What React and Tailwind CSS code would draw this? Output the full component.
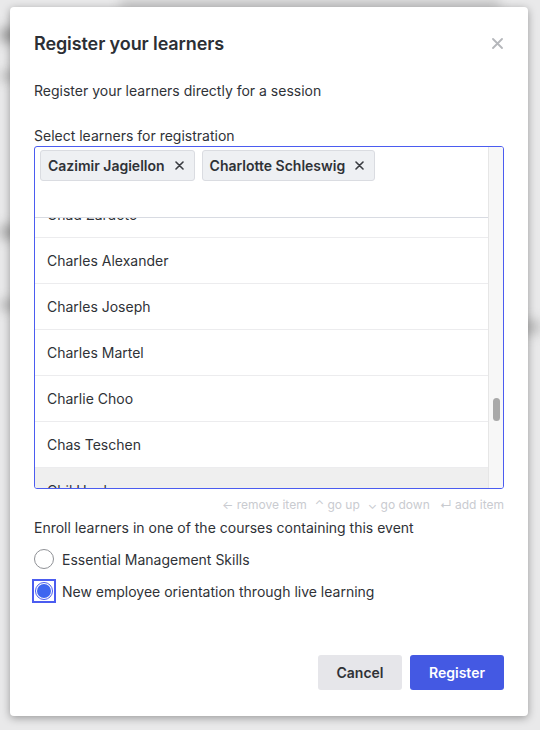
import React, { useState } from 'react'

const learners = [
  'Chad Zardoto',
  'Charles Alexander',
  'Charles Joseph',
  'Charles Martel',
  'Charlie Choo',
  'Chas Teschen',
  'Chil Hook',
]

const courses = [
  'Essential Management Skills',
  'New employee orientation through live learning',
]

function Chip ({ label }) {
  return (
    <span className="flex items-center gap-[10px] h-[31px] pl-[7px] pr-[10px] rounded-[3px] border border-[#dadce1] bg-[#eef0f3] text-[14px] font-semibold text-[#2f3237]">
      {label}
      <svg width="9" height="9" viewBox="0 0 9 9" className="text-[#3a3d42]">
        <path d="M1 1l7 7M8 1l-7 7" stroke="currentColor" strokeWidth="1.6" strokeLinecap="round" />
      </svg>
    </span>
  )
}

export default function App () {
  const [course, setCourse] = useState(1)

  return (
    <div className="relative w-[540px] h-[730px] overflow-hidden bg-[#e9e9ea]" style={{ fontFamily: 'Inter, "Noto Sans", sans-serif' }}>
      {/* blurred page behind the modal */}
      <div className="absolute inset-0 blur-[6px] opacity-80">
        <div className="absolute left-0 top-[28px] w-[40px] h-[14px] bg-[#8a8a8a]" />
        <div className="absolute left-0 top-[72px] w-[30px] h-[8px] bg-[#a5a5a5]" />
        <div className="absolute left-0 top-[225px] w-[30px] h-[14px] bg-[#9a9a9a]" />
        <div className="absolute left-0 top-[300px] w-[30px] h-[10px] bg-[#a5a5a5]" />
        <div className="absolute left-[120px] top-0 w-[380px] h-[10px] bg-[#b8b8b8]" />
        <div className="absolute right-0 top-[320px] w-[20px] h-[14px] bg-[#b0b0b0]" />
      </div>

      <div className="absolute left-[10px] top-[7px] w-[518px] h-[709px] bg-white rounded-[4px] shadow-[0_2px_8px_rgba(0,0,0,0.35)] px-[24px] pt-[26px] flex flex-col">
        <div className="flex items-center justify-between h-[20px]">
          <h2 className="text-[18px] font-semibold text-[#2c2f35] tracking-[-0.1px]">Register your learners</h2>
          <svg width="11" height="11" viewBox="0 0 11 11" className="mr-[1px] text-[#b5b7bb]">
            <path d="M1 1l9 9M10 1l-9 9" stroke="currentColor" strokeWidth="1.8" strokeLinecap="round" />
          </svg>
        </div>

        <p className="mt-[27px] text-[14px] text-[#2f3237]">Register your learners directly for a session</p>

        <label className="mt-[24px] text-[14px] text-[#2f3237]">Select learners for registration</label>

        <div className="h-[343px] border border-[#4b5cf0] rounded-[3px] flex overflow-hidden">
          <div className="flex-1 flex flex-col min-w-0">
            <div className="h-[71px] border-b border-[#d8dbe2] px-[5px] pt-[3px] flex items-start gap-[7px] shrink-0">
              <Chip label="Cazimir Jagiellon" />
              <Chip label="Charlotte Schleswig" />
            </div>
            <div className="flex-1 overflow-hidden">
              <ul className="-mt-[26px]">
                {learners.map((name, i) => (
                  <li
                    key={name}
                    className={`h-[46px] flex items-center px-[12px] text-[14px] text-[#2f3237] border-b border-[#ececee] ${i === learners.length - 1 ? 'bg-[#efefef]' : ''}`}
                  >
                    {name}
                  </li>
                ))}
              </ul>
            </div>
          </div>
          <div className="w-[15px] shrink-0 bg-[#f7f7f7] border-l border-[#e6e6e6] pt-[251px] flex justify-center">
            <div className="w-[7px] h-[23px] rounded-full bg-[#a9a9a9]" />
          </div>
        </div>

        <div className="mt-[8px] flex justify-end gap-[8px] text-[12px] text-[#c9cbd0] leading-[16px]">
          <span>← remove item</span>
          <span>⌃ go up</span>
          <span>⌄ go down</span>
          <span className="ml-[2px]">↵ add item</span>
        </div>

        <p className="mt-[4px] text-[14px] text-[#2f3237]">Enroll learners in one of the courses containing this event</p>

        <div className="mt-[11px] flex flex-col gap-[12px]">
          {courses.map((c, i) => (
            <label key={c} className="flex items-center gap-[8px] text-[14px] text-[#2f3237] h-[20px] cursor-pointer" onClick={() => setCourse(i)}>
              {course === i ? (
                <span className="w-[20px] h-[20px] outline outline-2 outline-[#4b5cf0] flex items-center justify-center">
                  <span className="w-[18px] h-[18px] rounded-full border border-[#4b5cf0] flex items-center justify-center">
                    <span className="w-[14px] h-[14px] rounded-full bg-[#3f66f0]" />
                  </span>
                </span>
              ) : (
                <span className="w-[20px] h-[20px] rounded-full border border-[#8f9196] bg-white" />
              )}
              {c}
            </label>
          ))}
        </div>

        <div className="mt-auto mb-[26px] flex justify-end gap-[8px]">
          <button className="h-[35px] w-[84px] rounded-[3px] bg-[#e6e6ea] text-[14px] font-semibold text-[#2f3237]">Cancel</button>
          <button className="h-[35px] w-[94px] rounded-[3px] bg-[#4459e3] text-[14px] font-semibold text-white">Register</button>
        </div>
      </div>
    </div>
  )
}
